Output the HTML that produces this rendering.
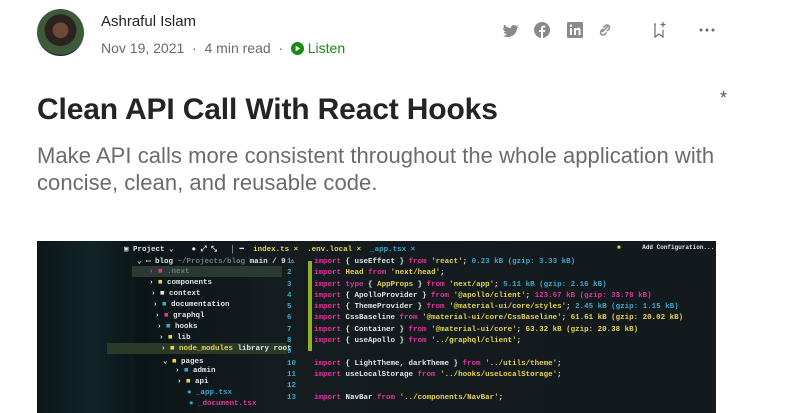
<!DOCTYPE html>
<html><head><meta charset="utf-8"><style>
*{margin:0;padding:0;box-sizing:border-box}
body{width:786px;height:413px;overflow:hidden;background:#fff;font-family:"Liberation Sans",sans-serif;position:relative}
.abs{position:absolute}
.av{left:37px;top:9px;width:47px;height:47px;border-radius:50%;background:radial-gradient(circle at 50% 45%,#6b4a36 0 22%,#2a2320 23% 45%,#3e5a3a 46% 70%,#1b2630 71%);overflow:hidden}
.name{left:101px;top:13px;font-size:15px;color:#242424}
.meta{left:101px;top:40px;font-size:14px;color:#6b6b6b;white-space:nowrap}
.meta .g{color:#1a8917}
.title{left:37px;top:93px;font-size:30px;font-weight:bold;color:#242424;letter-spacing:-0.15px;white-space:nowrap}
.sub{left:37px;top:142px;font-size:22px;line-height:27px;color:#6b6b6b;width:720px;letter-spacing:0.05px}
.img{left:37px;top:241px;width:679px;height:172px;background:linear-gradient(90deg,#0c1619 0,#102428 8%,#0b1417 15%,#141c20 35%,#13191d 100%);overflow:hidden;font-family:"Liberation Mono",monospace;font-size:7.5px;font-weight:bold}
.img div{position:absolute;white-space:nowrap}
.k{color:#e0349a}.s{color:#e6d34a}.w{color:#dfe6ea}.c{color:#3aa6c9}.n{color:#6b7d86}
</style></head><body>
<div class="abs av"></div>
<div class="abs name">Ashraful Islam</div>
<div class="abs meta">Nov 19, 2021 &nbsp;·&nbsp; 4 min read &nbsp;·&nbsp; <span class="g"><svg width="13" height="13" viewBox="0 0 14 14" style="vertical-align:-2px"><circle cx="7" cy="7" r="7" fill="#1a8917"/><path d="M5 4l5 3-5 3z" fill="#fff"/></svg> Listen</span></div>
<svg class="abs" style="left:503px;top:21px" width="220" height="18" viewBox="0 0 220 18">
<path d="M2 4c1 2 4 3 6 3 0-3 3-4 5-2l2-1-1 2 2 0-2 1c0 5-4 9-9 9-2 0-3 0-5-1 2 0 3-1 4-2-2 0-3-1-3-2h2c-2-1-3-2-3-4l2 1c-1-1-2-3-1-4z" fill="#8a8a8a"/>
<circle cx="39" cy="9" r="8" fill="#8a8a8a"/><path d="M40 17v-6h2l.3-2H40V7.5c0-.6.2-1 1-1h1.3V4.7H40.5c-2 0-2.5 1.2-2.5 2.6V9h-2v2h2v6z" fill="#fff"/>
<rect x="64" y="1" width="16" height="16" rx="1" fill="#8a8a8a"/><path d="M67 7h2v7h-2zM68 3.5a1.2 1.2 0 1 1 0 2.4 1.2 1.2 0 0 1 0-2.4M71 7h2v1c.5-.8 1.4-1.2 2.3-1.2 2 0 2.3 1.3 2.3 3V14h-2v-3.5c0-.9 0-1.8-1.2-1.8s-1.4.9-1.4 1.8V14h-2z" fill="#fff"/>
<path d="M99 11l6-6M100 8l-2 2a2.5 2.5 0 0 0 3.5 3.5l2-2M104 10l2-2a2.5 2.5 0 0 0-3.5-3.5l-2 2" stroke="#8a8a8a" stroke-width="1.5" fill="none"/>
<path d="M153 3h-1v13l4-3 4 3V9M160 1v5M157.5 3.5h5" stroke="#6b6b6b" stroke-width="1.2" fill="none"/>
<circle cx="198" cy="9" r="1.5" fill="#6b6b6b"/><circle cx="204" cy="9" r="1.5" fill="#6b6b6b"/><circle cx="210" cy="9" r="1.5" fill="#6b6b6b"/>
</svg>
<div class="abs title">Clean API Call With React Hooks</div>
<div class="abs" style="left:720px;top:88px;font-size:18px;color:#555">*</div>
<div class="abs sub">Make API calls more consistent throughout the whole application with concise, clean, and reusable code.</div>
<div class="abs img">
<div style="left:93px;top:0;width:4px;height:172px;background:#0f1a1e"></div>
<div style="left:95px;top:25px;width:150px;height:11px;background:#2a3a32"></div>
<div style="left:70px;top:102px;width:180px;height:11px;background:#2a3a28"></div>
<div style="left:271px;top:20px;width:4px;height:90px;background:#8db22a"></div>
<div style="left:87px;top:3px" class="w">▣ Project ⌄ &nbsp;&nbsp; ● ⤢ ⤡ &nbsp;&nbsp;│ ━ &nbsp;<span class="s">index.ts ×</span> &nbsp;<span class="s">.env.local ×</span> <span class="c">&nbsp;_app.tsx ×</span></div>
<div style="left:100px;top:15px" class="w">⌄ ▭ blog <span class="n">~/Projects/blog</span> main / 9 ⚠</div>
<div style="left:112px;top:27px" class="k">› ■ <span class="n">.next</span></div>
<div style="left:112px;top:38px" class="w">› <span class="s">■</span> components</div>
<div style="left:114px;top:49px" class="w">› ■ context</div>
<div style="left:116px;top:60px" class="w">› <span class="c">■</span> documentation</div>
<div style="left:118px;top:71px" class="w">› <span class="k">■</span> graphql</div>
<div style="left:120px;top:82px" class="w">› <span class="c">■</span> hooks</div>
<div style="left:122px;top:93px" class="w">› <span class="s">■</span> lib</div>
<div style="left:124px;top:104px" class="w">› <span class="s">■ node_modules</span> library root</div>
<div style="left:126px;top:115px" class="w">⌄ <span class="s">■</span> pages</div>
<div style="left:138px;top:126px" class="w">› <span class="c">■</span> admin</div>
<div style="left:140px;top:137px" class="w">› <span class="s">■</span> api</div>
<div style="left:150px;top:148px" class="c">● _app.tsx</div>
<div style="left:152px;top:159px" class="k"><span class="c">●</span> _document.tsx</div>
<div style="left:250px;top:16px;line-height:11.3px" class="c">1<br>2<br>3<br>4<br>5<br>6<br>7<br>8<br>9<br>10<br>11<br>12<br>13</div>
<div style="left:277px;top:16px;line-height:11.3px" class="w">
<span class="k">import</span> { useEffect } <span class="k">from</span> <span class="s">'react'</span>; <span class="c">0.23 kB (gzip: 3.33 kB)</span><br>
<span class="k">import</span> <span class="s">Head</span> <span class="k">from</span> <span class="s">'next/head'</span>;<br>
<span class="k">import</span> <span class="k">type</span> { <span class="s">AppProps</span> } <span class="k">from</span> <span class="s">'next/app'</span>; <span class="c">5.11 kB (gzip: 2.16 kB)</span><br>
<span class="k">import</span> { ApolloProvider } <span class="k">from</span> <span class="s">'@apollo/client'</span>; <span class="k">123.67 kB (gzip: 33.78 kB)</span><br>
<span class="k">import</span> { ThemeProvider } <span class="k">from</span> <span class="s">'@material-ui/core/styles'</span>; <span class="c">2.45 kB (gzip: 1.15 kB)</span><br>
<span class="k">import</span> CssBaseline <span class="k">from</span> <span class="s">'@material-ui/core/CssBaseline'</span>; <span class="s">61.61 kB (gzip: 20.02 kB)</span><br>
<span class="k">import</span> { Container } <span class="k">from</span> <span class="s">'@material-ui/core'</span>; <span class="s">63.32 kB (gzip: 20.38 kB)</span><br>
<span class="k">import</span> { useApollo } <span class="k">from</span> <span class="s">'../graphql/client'</span>;<br><br>
<span class="k">import</span> { LightTheme, darkTheme } <span class="k">from</span> <span class="s">'../utils/theme'</span>;<br>
<span class="k">import</span> useLocalStorage <span class="k">from</span> <span class="s">'../hooks/useLocalStorage'</span>;<br><br>
<span class="k">import</span> NavBar <span class="k">from</span> <span class="s">'../components/NavBar'</span>;</div>
<div style="left:580px;top:3px;font-size:6px" class="w"><span class="s">■</span> &nbsp;&nbsp;&nbsp;&nbsp; Add Configuration...</div>
</div>
</body></html>
